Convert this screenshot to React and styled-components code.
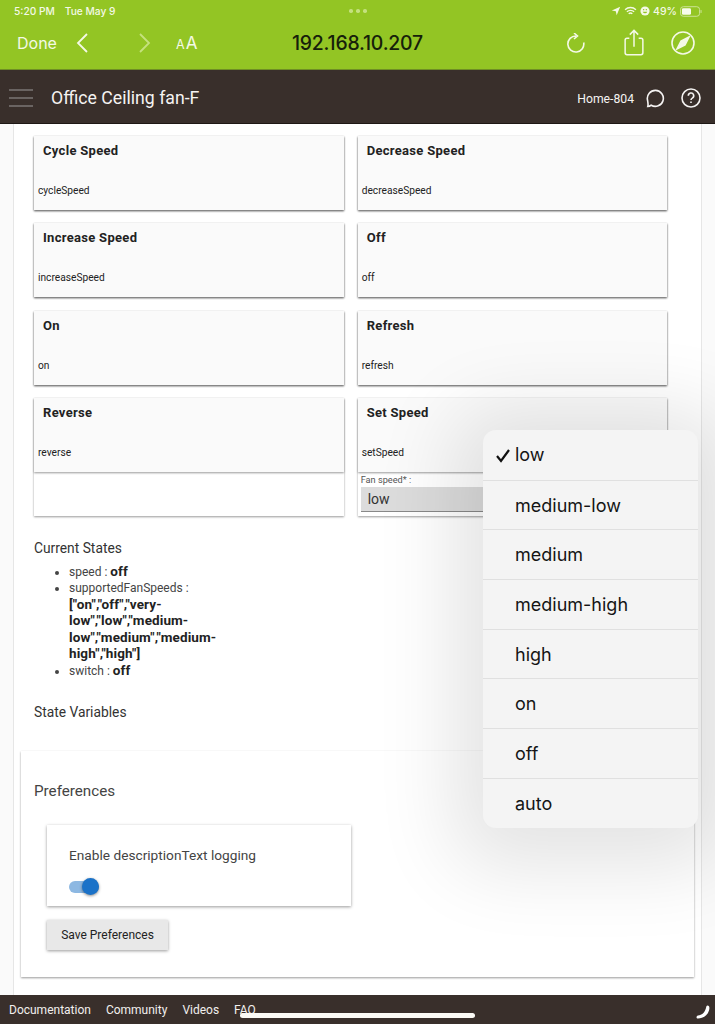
import styled, { createGlobalStyle } from "styled-components";

const GlobalStyle = createGlobalStyle`
	html, body {
		margin: 0;
		padding: 0;
		background: #fff;
	}
	body {
		font-family: Roboto, "Liberation Sans", sans-serif;
		color: #222;
	}
`;

const Page = styled.div`
	position: relative;
	width: 715px;
	height: 1024px;
	overflow: hidden;
	display: flex;
	flex-direction: column;
	background: #fafafa;
`;

const SafariBar = styled.div`
	height: 70px;
	flex: none;
	background: #93c524;
	border-bottom: 1px solid #6f8f24;
	box-sizing: border-box;
	display: flex;
	flex-direction: column;
`;

const StatusRow = styled.div`
	height: 21px;
	padding: 1px 13px 0 14px;
	box-sizing: border-box;
	display: flex;
	align-items: center;
	color: #f4f9e6;
	font: 500 10.2px Inter, sans-serif;
`;

const StatusTime = styled.div`
	display: flex;
	gap: 10px;
	width: 335px;
`;

const Dots = styled.div`
	display: flex;
	gap: 3.5px;
	i {
		width: 3.5px;
		height: 3.5px;
		border-radius: 50%;
		background: #c5e17e;
	}
`;

const StatusIcons = styled.div`
	margin-left: auto;
	display: flex;
	align-items: center;
	gap: 3px;
	font-size: 10.5px;
`;

const ToolRow = styled.div`
	flex: 1;
	display: flex;
	align-items: center;
	padding: 0 18px 4px 17px;
	color: #f4f9e6;
`;

const DoneLabel = styled.span`
	font: 400 16px Inter, sans-serif;
	width: 58px;
`;

const NavIcon = styled.svg`
	width: 16px;
	height: 24px;
	fill: none;
	stroke: ${(p) => (p.$dim ? "#c5e17e" : "#f4f9e6")};
	stroke-width: 1.8;
	margin-right: ${(p) => p.$gap || 0}px;
`;

const TextSize = styled.span`
	font: 400 17px Inter, sans-serif;
	width: 116px;
	margin-left: -1px;
	small {
		font-size: 12.5px;
		margin-right: 1px;
	}
`;

const UrlText = styled.span`
	font: 500 19.4px Inter, sans-serif;
	color: #16200a;
	width: 209px;
	letter-spacing: -0.2px;
`;

const ToolIcon = styled.svg`
	fill: none;
	stroke: #f4f9e6;
	stroke-width: 1.6;
	width: ${(p) => p.$size}px;
	height: ${(p) => p.$size}px;
	margin-left: ${(p) => p.$gap}px;
`;

const HubBar = styled.header`
	height: 54px;
	flex: none;
	box-sizing: border-box;
	background: #392f2b;
	border-bottom: 1px solid #1e1815;
	display: flex;
	align-items: center;
	padding: 2px 14px 0 9px;
	color: #f5f3f2;
`;

const Burger = styled.div`
	width: 24px;
	display: flex;
	flex-direction: column;
	gap: 6px;
	margin-right: 18px;
	i {
		height: 2px;
		background: #6a6462;
	}
`;

const HubTitle = styled.div`
	font-size: 17.7px;
	flex: 1;
`;

const HubName = styled.span`
	font-size: 12.2px;
	margin: 3px 11px 0 0;
`;

const HubIcon = styled.svg`
	width: 20px;
	height: 20px;
	fill: none;
	stroke: #f5f3f2;
	stroke-width: 1.6;
	margin-left: ${(p) => p.$gap || 0}px;
`;

const Main = styled.main`
	flex: 1;
	min-height: 0;
	margin: 0 13px;
	background: #fff;
	border-left: 1px solid #e6e6e6;
	border-right: 1px solid #e6e6e6;
	padding: 12px 7px 0 7px;
`;

const Commands = styled.div`
	display: grid;
	grid-template-columns: 310px 309.3px;
	column-gap: 13.7px;
	row-gap: 13.4px;
	margin-left: 13px;
`;

const CommandCell = styled.div`
	background: #fff;
	box-shadow: 0 1px 2px rgba(0, 0, 0, 0.4);
	${(p) => p.$tall && "height: 118px;"}
`;

const CommandCard = styled.div`
	height: 74px;
	box-sizing: border-box;
	background: #fafafa;
	box-shadow: 0 1px 2px rgba(0, 0, 0, 0.4);
	padding: 7px 4px 0;
	display: flex;
	flex-direction: column;
`;

const CommandTitle = styled.div`
	font-size: 13px;
	font-weight: 700;
	letter-spacing: 0.3px;
	margin-left: 5px;
	line-height: 15px;
`;

const CommandName = styled.div`
	font-size: 10.2px;
	margin-top: 26px;
	line-height: 14px;
`;

const FanLabel = styled.div`
	font-size: 9.2px;
	color: #555;
	margin: 3px 0 0 3px;
	line-height: 10px;
`;

const FanSelect = styled.div`
	margin: 2px 0 0 3px;
	height: 25px;
	box-sizing: border-box;
	background: #dcdcdc;
	border-bottom: 1px solid #888;
	font-size: 14px;
	line-height: 24px;
	padding-left: 7px;
	color: #333;
`;

const StatesBlock = styled.section`
	margin: 23px 0 0 13px;
	width: 200px;
	line-height: 16.5px;
	color: #444;
`;

const SectionLabel = styled.div`
	font-size: 13.8px;
	line-height: 18px;
	color: #333;
`;

const StateList = styled.ul`
	margin: 6.5px 0 23.6px;
	padding-left: 35px;
	font-size: 12px;
	b {
		font-size: 13.5px;
		line-height: 1;
		letter-spacing: 0.1px;
		color: #222;
	}
`;

const PrefsCard = styled.section`
	margin-top: 30px;
	height: 226px;
	box-sizing: border-box;
	background: #fff;
	box-shadow: 0 1px 2px rgba(0, 0, 0, 0.4);
	padding: 30px 0 0 13px;
`;

const PrefsTitle = styled.h2`
	margin: 0;
	font-size: 15.2px;
	font-weight: 400;
	line-height: 20px;
	color: #444;
`;

const ToggleCard = styled.div`
	margin: 24px 0 0 13px;
	width: 304px;
	height: 81px;
	box-sizing: border-box;
	background: #fff;
	box-shadow: 0 1px 3px rgba(0, 0, 0, 0.4);
	padding: 22px;
	font-size: 13.7px;
	line-height: 17px;
	color: #444;
`;

const Toggle = styled.div`
	position: relative;
	margin-top: 17px;
	width: 30px;
	height: 12px;
	border-radius: 6px;
	background: #8db8e2;
	&::after {
		content: "";
		position: absolute;
		right: 0;
		top: -2.5px;
		width: 17px;
		height: 17px;
		border-radius: 50%;
		background: #1b72c8;
		box-shadow: 0 1px 3px rgba(0, 0, 0, 0.45);
	}
`;

const SaveButton = styled.button`
	display: block;
	margin: 14px 0 0 13px;
	width: 121px;
	height: 30px;
	border: 0;
	background: #e8e8e8;
	box-shadow: 0 1px 3px rgba(0, 0, 0, 0.4);
	font: 400 12px Roboto, sans-serif;
	color: #222;
	padding: 0;
`;

const Footer = styled.footer`
	height: 29px;
	flex: none;
	box-sizing: border-box;
	background: #392f2b;
	padding-left: 9px;
	display: flex;
	align-items: center;
	gap: 15px;
	color: #f2efee;
	font-size: 12px;
`;

const PhoneIcon = styled.svg`
	position: absolute;
	right: 5px;
	bottom: 5px;
	width: 14px;
	height: 14px;
	fill: #fff;
`;

const HomeIndicator = styled.div`
	position: absolute;
	left: 240px;
	bottom: 6px;
	width: 235px;
	height: 5px;
	border-radius: 3px;
	background: #fbfaf6;
`;

const SpeedMenu = styled.ul`
	position: absolute;
	left: 483px;
	top: 430px;
	width: 215px;
	margin: 0;
	padding: 0;
	list-style: none;
	border-radius: 13px;
	background: #f4f4f4;
	box-shadow: 0 10px 80px 30px rgba(0, 0, 0, 0.11);
	overflow: hidden;
`;

const SpeedOption = styled.li`
	position: relative;
	box-sizing: border-box;
	height: 49.7px;
	padding-left: 32px;
	display: flex;
	align-items: center;
	font: 400 18px Inter, sans-serif;
	color: #151515;
	border-top: ${(p) => (p.$first ? "0" : "1px solid #e0e0e0")};
`;

const CheckMark = styled.svg`
	position: absolute;
	left: 12px;
	top: 18px;
	width: 16px;
	height: 15px;
	fill: none;
	stroke: #111;
	stroke-width: 2.2;
`;

const commands = [
	["Cycle Speed", "cycleSpeed"],
	["Decrease Speed", "decreaseSpeed"],
	["Increase Speed", "increaseSpeed"],
	["Off", "off"],
	["On", "on"],
	["Refresh", "refresh"],
	["Reverse", "reverse"],
	["Set Speed", "setSpeed"],
];

const speeds = ["low", "medium-low", "medium", "medium-high", "high", "on", "off", "auto"];

function App() {
	return (
		<Page>
			<GlobalStyle />
			<SafariBar>
				<StatusRow>
					<StatusTime>
						<span>5:20 PM</span>
						<span>Tue May 9</span>
					</StatusTime>
					<Dots>
						<i />
						<i />
						<i />
					</Dots>
					<StatusIcons>
						<svg width="10" height="10" viewBox="0 0 12 12" fill="#f4f9e6">
							<path d="M11 1 1 5.500l4.800.8L6.800 11z" />
						</svg>
						<svg width="13" height="10" viewBox="0 0 14 11" fill="none" stroke="#f4f9e6" strokeWidth="1.500">
							<path d="M1 4a9 9 0 0 1 12 0M3 6.400a6 6 0 0 1 8 0M5 8.600a3 3 0 0 1 4 0" />
						</svg>
						<svg width="10" height="10" viewBox="0 0 11 11">
							<circle cx="5.500" cy="5.500" r="5" fill="#f4f9e6" />
							<path d="M3 6.300a2.700 2.700 0 0 0 5 0z" fill="#93c524" />
							<circle cx="4" cy="4" r=".8" fill="#93c524" />
							<circle cx="7" cy="4" r=".8" fill="#93c524" />
						</svg>
						<span>49%</span>
						<svg width="22" height="11" viewBox="0 0 23 11">
							<rect x=".5" y=".5" width="20" height="10" rx="3" fill="none" stroke="#cfe59a" />
							<rect x="2" y="2" width="9.500" height="7" rx="1.500" fill="#f7fbec" />
							<rect x="21.500" y="4" width="1" height="3" fill="#cfe59a" />
						</svg>
					</StatusIcons>
				</StatusRow>
				<ToolRow>
					<DoneLabel>Done</DoneLabel>
					<NavIcon viewBox="0 0 16 24" $gap={45}>
						<path d="M12 3 3 12l9 9" />
					</NavIcon>
					<NavIcon viewBox="0 0 16 24" $dim $gap={25}>
						<path d="m4 3 9 9-9 9" />
					</NavIcon>
					<TextSize>
						<small>A</small>A
					</TextSize>
					<UrlText>192.168.10.207</UrlText>
					<ToolIcon viewBox="0 0 20 20" $size={20} $gap={65}>
						<path d="M17.700 9.500A8 8 0 1 1 10 3M8 0l3.500 3L8 6" />
					</ToolIcon>
					<ToolIcon viewBox="0 0 24 30" $size={28} $gap={34}>
						<path d="M7 10H4.500a2 2 0 0 0-2 2v13.500a2 2 0 0 0 2 2h15a2 2 0 0 0 2-2V12a2 2 0 0 0-2-2H17M12 19V2M7.500 6 12 1.500 16.500 6" />
					</ToolIcon>
					<ToolIcon viewBox="0 0 24 24" $size={24} $gap={23}>
						<circle cx="12" cy="12" r="11" />
						<path d="m18 6-8 4-4 8 8-4z" fill="#f4f9e6" />
					</ToolIcon>
				</ToolRow>
			</SafariBar>
			<HubBar>
				<Burger>
					<i />
					<i />
					<i />
				</Burger>
				<HubTitle>Office Ceiling fan-F</HubTitle>
				<HubName>Home-804</HubName>
				<HubIcon viewBox="0 0 20 20">
					<path d="M2.800 18.500c1.400 0 2.500-.5 3.400-1.300A8 8 0 1 0 2.500 12c.4 2.300.9 4.600.3 6.500z" />
				</HubIcon>
				<HubIcon viewBox="0 0 20 20" $gap={16}>
					<circle cx="10" cy="10" r="9" />
					<path d="M7.300 7.800a2.700 2.700 0 1 1 4 2.300c-.9.500-1.300 1-1.300 2M10 13.600v1.400" />
				</HubIcon>
			</HubBar>
			<Main>
				<Commands>
					{commands.map(([title, name], i) => (
						<CommandCell key={name} $tall={i > 5}>
							<CommandCard>
								<CommandTitle>{title}</CommandTitle>
								<CommandName>{name}</CommandName>
							</CommandCard>
							{name === "setSpeed" && (
								<>
									<FanLabel>Fan speed* :</FanLabel>
									<FanSelect>low</FanSelect>
								</>
							)}
						</CommandCell>
					))}
				</Commands>
				<StatesBlock>
					<SectionLabel>Current States</SectionLabel>
					<StateList>
						<li>
							speed : <b>off</b>
						</li>
						<li>
							supportedFanSpeeds : <b>["on","off","very-low","low","medium-low","medium","medium-high","high"]</b>
						</li>
						<li>
							switch : <b>off</b>
						</li>
					</StateList>
					<SectionLabel>State Variables</SectionLabel>
				</StatesBlock>
				<PrefsCard>
					<PrefsTitle>Preferences</PrefsTitle>
					<ToggleCard>
						Enable descriptionText logging
						<Toggle />
					</ToggleCard>
					<SaveButton>Save Preferences</SaveButton>
				</PrefsCard>
			</Main>
			<Footer>
				<span>Documentation</span>
				<span>Community</span>
				<span>Videos</span>
				<span>FAQ</span>
			</Footer>
			<PhoneIcon viewBox="0 0 14 14">
				<path d="M11.500.5C13.500.5 13.800 3 13 5.500 11.500 10.500 7 13.500 2 13.500 0 13.500 0 11 2 10.500 6 10 8.500 8 10 3 10.300 1.500 10.500.5 11.500.5z" />
			</PhoneIcon>
			<HomeIndicator />
			<SpeedMenu>
				{speeds.map((speed, i) => (
					<SpeedOption key={speed} $first={i === 0}>
						{i === 0 && (
							<CheckMark viewBox="0 0 16 15">
								<path d="m2 8 4 5 8-11" />
							</CheckMark>
						)}
						{speed}
					</SpeedOption>
				))}
			</SpeedMenu>
		</Page>
	);
}

export default App;
